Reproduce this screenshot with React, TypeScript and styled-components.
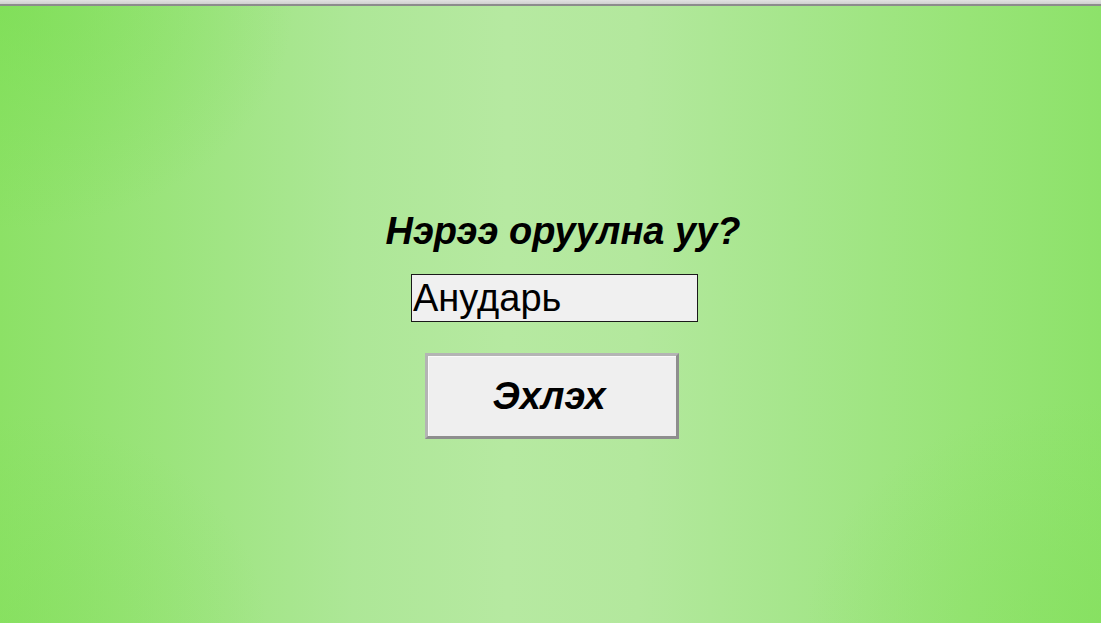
import React from "react";
import styled, { createGlobalStyle } from "styled-components";

const Global = createGlobalStyle`
  html, body { margin: 0; padding: 0; height: 100%; }
  body { font-family: "Liberation Sans", Arial, sans-serif; overflow: hidden; }
  #root { height: 100%; }
`;

const Page = styled.div`
  width: 1101px;
  height: 623px;
  display: flex;
  flex-direction: column;
`;

const TopBar = styled.div`
  height: 4px;
  flex: none;
  background: linear-gradient(#e2e2e2, #cfcfcf);
  border-bottom: 2px solid #8c8c8c;
`;

const Stage = styled.main`
  flex: 1;
  display: flex;
  flex-direction: column;
  align-items: center;
  padding-top: 206px;
  background:
    radial-gradient(ellipse 420px 320px at 0% 0%, rgba(120, 222, 80, 0.55), rgba(120, 222, 80, 0) 70%),
    radial-gradient(ellipse 420px 320px at 100% 100%, rgba(130, 224, 90, 0.5), rgba(130, 224, 90, 0) 70%),
    radial-gradient(ellipse 380px 300px at 0% 100%, rgba(130, 224, 90, 0.45), rgba(130, 224, 90, 0) 70%),
    linear-gradient(to right, #8ce166 0%, #9be47c 15%, #ade797 32%, #b6e9a1 46%, #b3e89d 58%, #a6e68c 72%, #98e477 88%, #8de26a 100%);
`;

const Title = styled.h1`
  margin: 0 0 0 25px;
  font-family: "Liberation Sans", Arial, sans-serif;
  font-weight: bold;
  font-style: italic;
  font-size: 38px;
  line-height: 38px;
  color: #000;
`;

const NameInput = styled.input`
  box-sizing: border-box;
  margin: 24px 0 0 8px;
  width: 287px;
  height: 48px;
  border: 1px solid #1a1a1a;
  background: #f0f0f0;
  padding: 0 0 0 1px;
  font-family: "Liberation Sans", Arial, sans-serif;
  font-size: 38px;
  color: #000;
  outline: none;
`;

const StartButton = styled.button`
  box-sizing: border-box;
  margin: 31px 0 0 3px;
  width: 254px;
  height: 86px;
  background: #efefef;
  border: 3px solid;
  border-color: #b4b4b4 #8e8e8e #8e8e8e #b4b4b4;
  box-shadow: inset 1px 1px 0 #fafafa;
  font-family: "Liberation Sans", Arial, sans-serif;
  font-weight: bold;
  font-style: italic;
  font-size: 38px;
  color: #000;
  padding: 0 6px 0 0;
  cursor: pointer;
`;

export default function App() {
  return (
    <>
      <Global />
      <Page>
        <TopBar />
        <Stage>
          <Title>Нэрээ оруулна уу?</Title>
          <NameInput defaultValue="Анударь" />
          <StartButton>Эхлэх</StartButton>
        </Stage>
      </Page>
    </>
  );
}
